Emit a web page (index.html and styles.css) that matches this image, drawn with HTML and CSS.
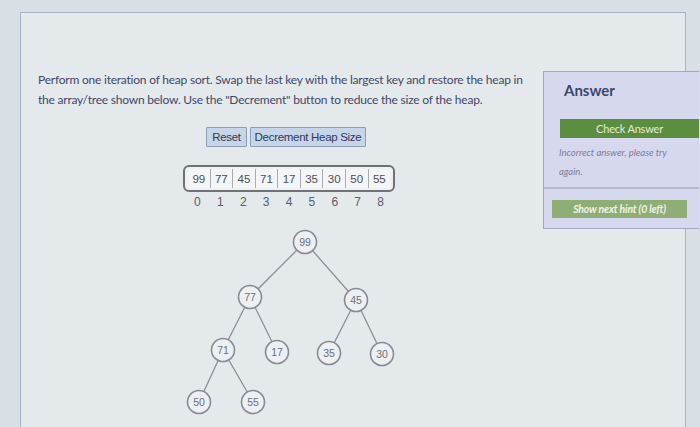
FILE: index.html
```html
<!DOCTYPE html>
<html>
<head>
<meta charset="utf-8">
<link rel="stylesheet" href="styles.css">
</head>
<body>
<div class="frame">
  <div class="main">
    <p class="prompt">Perform one iteration of heap sort. Swap the last key with the largest key and restore the heap in<br>the array/tree shown below. Use the "Decrement" button to reduce the size of the heap.</p>
    <div class="widget">
      <div class="buttons">
        <button class="btn">Reset</button>
        <button class="btn">Decrement Heap Size</button>
      </div>
      <div class="array">
        <span class="cell">99</span><span class="cell">77</span><span class="cell">45</span><span class="cell">71</span><span class="cell">17</span><span class="cell">35</span><span class="cell">30</span><span class="cell">50</span><span class="cell">55</span>
      </div>
      <div class="indices">
        <span>0</span><span>1</span><span>2</span><span>3</span><span>4</span><span>5</span><span>6</span><span>7</span><span>8</span>
      </div>
      <svg class="tree" width="240" height="200" viewBox="0 0 240 200">
        <g class="edges">
          <line x1="135" y1="22" x2="80" y2="77"/>
          <line x1="135" y1="22" x2="186" y2="80"/>
          <line x1="80" y1="77" x2="53" y2="130"/>
          <line x1="80" y1="77" x2="107" y2="132"/>
          <line x1="186" y1="80" x2="159" y2="133"/>
          <line x1="186" y1="80" x2="212" y2="134"/>
          <line x1="53" y1="130" x2="29" y2="182"/>
          <line x1="53" y1="130" x2="83" y2="182"/>
        </g>
        <g class="nodes">
          <circle cx="135" cy="22" r="11.5"/><text x="135" y="25.5">99</text>
          <circle cx="80" cy="77" r="11.5"/><text x="80" y="80.5">77</text>
          <circle cx="186" cy="80" r="11.5"/><text x="186" y="83.5">45</text>
          <circle cx="53" cy="130" r="11.5"/><text x="53" y="133.5">71</text>
          <circle cx="107" cy="132" r="11.5"/><text x="107" y="135.5">17</text>
          <circle cx="159" cy="133" r="11.5"/><text x="159" y="136.5">35</text>
          <circle cx="212" cy="134" r="11.5"/><text x="212" y="137.5">30</text>
          <circle cx="29" cy="182" r="11.5"/><text x="29" y="185.5">50</text>
          <circle cx="83" cy="182" r="11.5"/><text x="83" y="185.5">55</text>
        </g>
      </svg>
    </div>
  </div>
  <aside class="panel">
    <div class="panel-top">
      <h2 class="panel-title">Answer</h2>
      <button class="check">Check Answer</button>
      <p class="feedback">Incorrect answer, please try<br>again.</p>
    </div>
    <div class="panel-bottom">
      <button class="hint">Show next hint (0 left)</button>
    </div>
  </aside>
</div>
</body>
</html>
```
FILE: styles.css
```css
html, body {
  margin: 0;
  padding: 0;
  height: 100%;
  overflow: hidden;
}
body {
  background: #d9e0e5;
  font-family: Lato, "Open Sans", sans-serif;
  color: #3e4566;
}
.frame {
  margin: 12px 14px 0 20px;
  height: 430px;
  border-top: 1px solid #aab2c6;
  border-left: 1px solid #aab2c6;
  border-right: 1px solid #aab2c6;
  background: #e4e9ec;
  display: flex;
  align-items: flex-start;
}
.main {
  flex: 1;
  padding: 57px 0 0 17px;
}
.prompt {
  margin: 0;
  font-size: 12px;
  line-height: 20px;
  letter-spacing: -0.22px;
  white-space: nowrap;
  color: #404868;
}
.widget {
  margin: 17px 0 0 145px;
  width: 212px;
}
.buttons {
  display: flex;
  gap: 3px;
  padding-left: 23px;
}
.btn {
  margin: 0;
  height: 20px;
  padding: 0;
  white-space: nowrap;
  font-family: "Liberation Sans", Arial, sans-serif;
  font-size: 11.5px;
  letter-spacing: -0.3px;
  color: #2f3a55;
  background: #c7d5e9;
  border: 1px solid #8d9cb9;
  border-radius: 1px;
}
.btn + .btn {
  width: 116px;
}
.btn:first-child {
  width: 41px;
}
.array {
  margin-top: 18px;
  height: 27px;
  box-sizing: border-box;
  display: flex;
  padding: 2px 3px;
  border: 2px solid #6f7377;
  border-radius: 6px;
  background: #eef0f2;
}
.cell {
  flex: 1;
  display: flex;
  align-items: center;
  justify-content: center;
  font-family: "Liberation Sans", Arial, sans-serif;
  font-size: 11.5px;
  color: #4a4f57;
  background: #f4f5f7;
  border-left: 1px solid #a7adb4;
}
.cell:first-child {
  border-left: none;
}
.indices {
  display: flex;
  padding: 0 3px;
  height: 14px;
  margin-top: 3px;
}
.indices span {
  flex: 1;
  text-align: center;
  font-family: "Liberation Sans", Arial, sans-serif;
  font-size: 12px;
  line-height: 14px;
  color: #585e68;
}
.tree {
  display: block;
  margin: 11px 0 0 -13px;
}
.edges line {
  stroke: #8b8f96;
  stroke-width: 1.3;
}
.nodes circle {
  fill: #edf0f3;
  stroke: #878b93;
  stroke-width: 1.6;
}
.nodes text {
  font-family: "Liberation Sans", Arial, sans-serif;
  font-size: 10.5px;
  fill: #6a6f78;
  text-anchor: middle;
}
.panel {
  width: 155px;
  margin: 58px -14px 0 0;
  flex: none;
  background: #d6d9ee;
  border: 1px solid #a2a8c4;
  border-right: none;
}
.panel-top {
  padding: 8px 0 6px 20px;
  border-bottom: 2px solid #b6bad2;
}
.panel-title {
  margin: 0;
  font-size: 15px;
  line-height: 20px;
  font-weight: 700;
  color: #3c476d;
}
.check {
  display: block;
  margin: 19px 0 0 -4px;
  width: 139px;
  height: 19px;
  padding: 0;
  border: none;
  background: #5c8e3f;
  color: #e3ecd8;
  font-family: Lato, sans-serif;
  font-size: 11px;
  letter-spacing: -0.2px;
}
.feedback {
  margin: 5px 0 0 -5px;
  font-size: 9.5px;
  line-height: 19px;
  font-style: italic;
  color: #777d99;
}
.panel-bottom {
  padding: 11px 0 10px 8px;
}
.hint {
  display: block;
  margin: 0;
  width: 135px;
  height: 18px;
  padding: 0;
  border: none;
  background: #8fae73;
  color: #eef2ea;
  font-family: Lato, sans-serif;
  font-size: 10.5px;
  font-style: italic;
  font-weight: 700;
  letter-spacing: -0.2px;
}
```
